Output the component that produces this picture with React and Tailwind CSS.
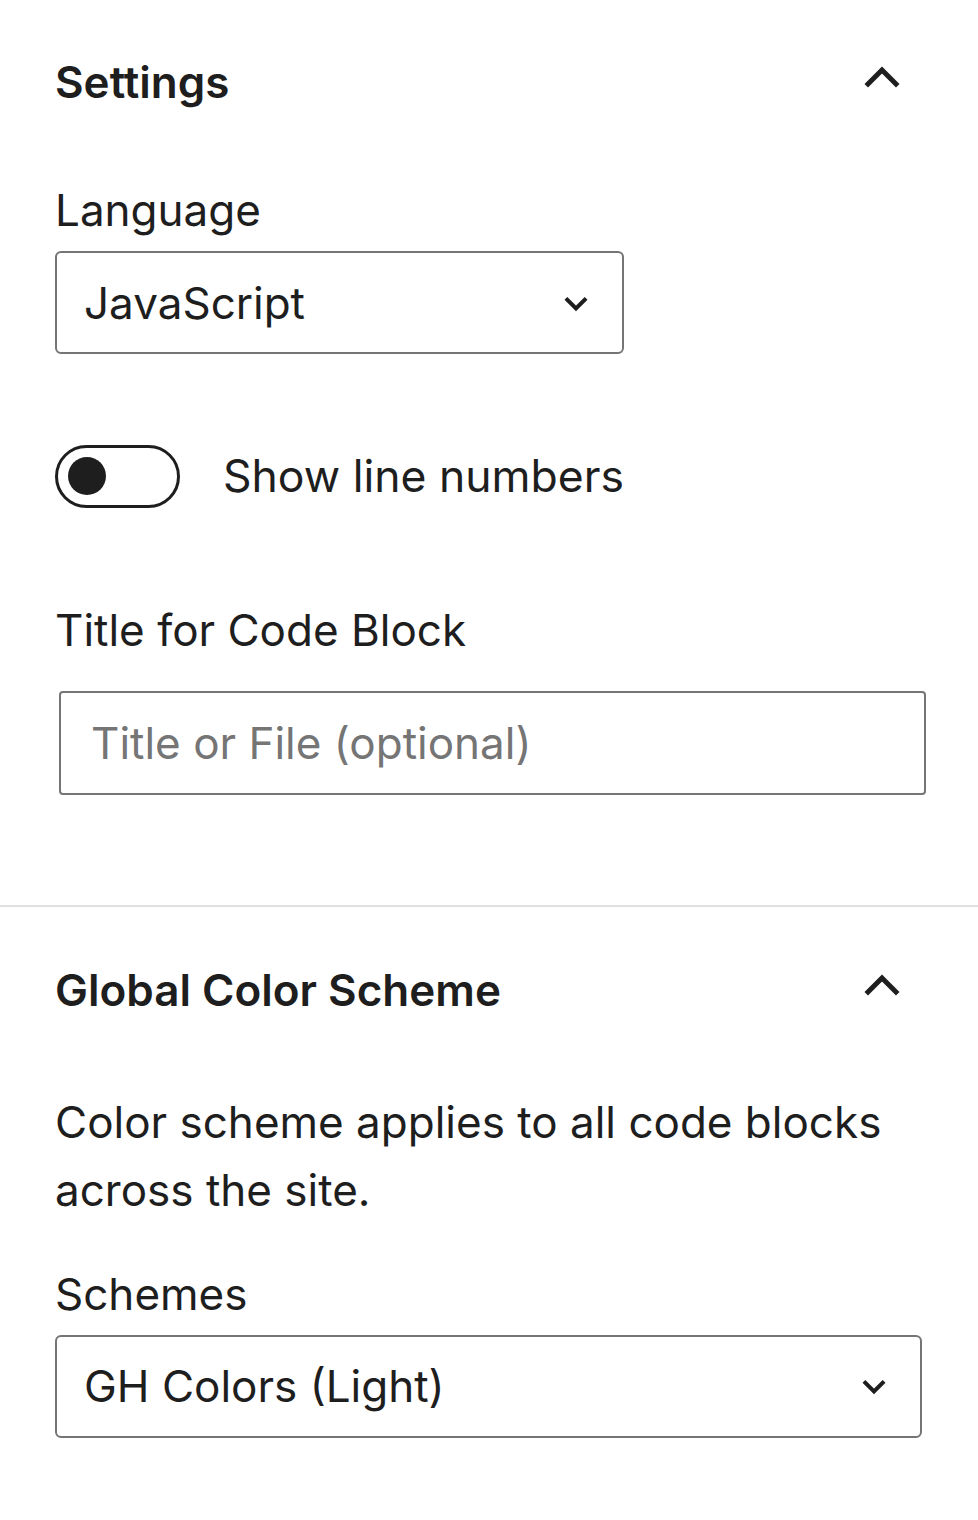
import React from 'react';

const Chevron = ({ up, className }) => (
  <svg viewBox="0 0 24 24" className={className} fill="none" stroke="currentColor" strokeWidth="2.2">
    {up ? <path d="M5 15l7-7 7 7" /> : <path d="M6.5 9.5l5.5 5.5 5.5-5.5" />}
  </svg>
);

const Select = ({ value, width }) => (
  <div className={`flex items-center justify-between h-[103px] border-2 border-[#757575] rounded-[6px] pl-[27px] pr-[24px] ${width}`}>
    <span className="text-[44px] text-[#1e1e1e]">{value}</span>
    <Chevron className="w-[44px] h-[44px] text-[#1e1e1e]" />
  </div>
);

export default function App() {
  return (
    <div className="w-[978px] min-h-[1520px] bg-white text-[#1e1e1e]" style={{ fontFamily: 'Inter, "Noto Sans", sans-serif' }}>
      <div className="px-[55px] pt-[52px] pb-[110px]">
        <div className="flex items-center justify-between h-[60px]">
          <h2 className="text-[44px] font-semibold">Settings</h2>
          <Chevron up className="w-[54px] h-[54px] mr-[14px] -mt-[6px]" />
        </div>
        <div className="mt-[70px] text-[44px] leading-[56px]">Language</div>
        <div className="mt-[13px]">
          <Select value="JavaScript" width="w-[569px]" />
        </div>
        <div className="mt-[89px] flex items-center">
          <div className="w-[125px] h-[63px] rounded-full border-[3px] border-[#1e1e1e] flex items-center pl-[10px]">
            <div className="w-[38px] h-[38px] rounded-full bg-[#1e1e1e]" />
          </div>
          <span className="ml-[43px] text-[44.5px]">Show line numbers</span>
        </div>
        <div className="mt-[92px] text-[44px] leading-[56px]">Title for Code Block</div>
        <div className="mt-[33px] ml-[4px] w-[867px] h-[104px] border-2 border-[#757575] rounded-[4px] flex items-center pl-[30px]">
          <span className="text-[44px] text-[#757575]">Title or File (optional)</span>
        </div>
      </div>
      <div className="border-t-2 border-[#e0e0e0]" />
      <div className="px-[55px] pt-[53px]">
        <div className="flex items-center justify-between h-[60px]">
          <h2 className="text-[44px] font-semibold">Global Color Scheme</h2>
          <Chevron up className="w-[54px] h-[54px] mr-[14px] -mt-[6px]" />
        </div>
        <p className="mt-[68px] text-[44px] leading-[68px] w-[880px]">Color scheme applies to all code blocks across the site.</p>
        <div className="mt-[42px] text-[44px] leading-[56px]">Schemes</div>
        <div className="mt-[13px]">
          <Select value="GH Colors (Light)" width="w-[867px]" />
        </div>
      </div>
    </div>
  );
}
